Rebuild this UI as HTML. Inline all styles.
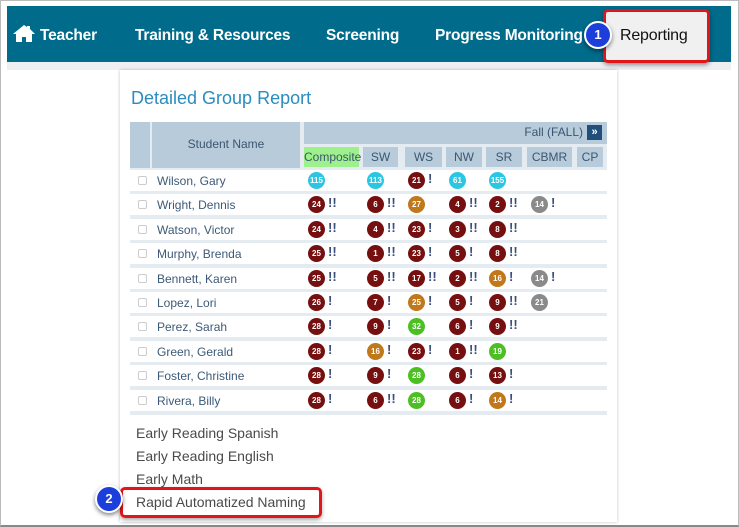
<!DOCTYPE html>
<html><head><meta charset="utf-8"><style>
*{margin:0;padding:0;box-sizing:border-box}
body{width:739px;height:527px;background:#fff;position:relative;overflow:hidden;font-family:"Liberation Sans",Arial,sans-serif}
.frame{position:absolute;left:0;top:0;width:739px;height:527px;border:1px solid #bbb;border-bottom:2px solid #888}
.nav{position:absolute;left:7px;top:6px;width:724px;height:56px;background:#006b8b}
.strip{position:absolute;left:7px;top:62px;width:724px;height:8px;background:#eeeff1}
.nt{position:absolute;top:27px;color:#fff;font-weight:bold;font-size:15.5px;letter-spacing:-0.2px}
.rep{position:absolute;left:603px;top:9px;width:107px;height:54px;background:#f0f0f0;border:3px solid #e0161b;border-radius:5px;box-shadow:0 2px 4px rgba(0,0,0,.4)}
.badge{position:absolute;width:28px;height:28px;border-radius:50%;background:#1c3fdc;border:2px solid #fff;box-shadow:0 2px 4px rgba(0,0,0,.5);color:#fff;font-size:13px;font-weight:bold;text-align:center;line-height:24px}
.panel{position:absolute;left:120px;top:70px;width:497px;height:452px;background:#fff;box-shadow:0 0 3px rgba(0,0,0,.25)}
.title{position:absolute;left:131px;top:88px;color:#2a8cc0;font-size:18px}
.tbl{position:absolute;left:130px;top:122px;width:477px;height:293px;background:#e4ebf1}
.hd{position:absolute;background:#b8cbdb;color:#3b5670;font-size:12px;text-align:center}
.row{position:absolute;left:0;width:477px;height:21px;background:#fff}
.cb{position:absolute;left:8px;top:6px;width:9px;height:9px;border:1px solid #ccc;border-radius:2px}
.nm{position:absolute;left:27px;top:4px;font-size:12px;color:#3c5a78}
.c{position:absolute;top:2px;width:17px;height:17px;border-radius:50%;color:#fff;font-size:8px;font-weight:bold;text-align:center;line-height:17px}
.r{background:#761010}.o{background:#c0781a}.b{background:#2cc6e2}.g{background:#4cc022}.y{background:#8a8a8a}
.x{position:absolute;top:1px;font-weight:bold;color:#3c4e7a;font-size:13px}
.lk{position:absolute;left:136px;font-size:14px;color:#4a4a4a}
.red2{position:absolute;left:120px;top:487px;width:202px;height:31px;border:3px solid #e0161b;border-radius:5px;box-shadow:0 2px 4px rgba(0,0,0,.35)}
</style></head><body>
<div class="frame"></div>
<div class="nav"></div>
<div class="strip"></div>
<svg style="position:absolute;left:12px;top:24px" width="24" height="18" viewBox="0 0 24 18"><path d="M12 1L1 10h3v8h6v-5h4v5h6v-8h3L18 5V2h-3v1z" fill="#fff"/></svg>
<div class="nt" style="left:40px">Teacher</div>
<div class="nt" style="left:135px">Training &amp; Resources</div>
<div class="nt" style="left:326px">Screening</div>
<div class="nt" style="left:435px">Progress Monitoring</div>
<div class="rep"></div>
<div class="nt" style="left:620px;color:#111;font-weight:normal;font-size:16px">Reporting</div>
<div class="badge" style="left:584px;top:21px">1</div>

<div class="panel"></div>
<div class="title">Detailed Group Report</div>
<div class="tbl">
<div class="hd" style="left:0;top:0;width:20px;height:46px"></div>
<div class="hd" style="left:22px;top:0;width:148px;height:46px;line-height:44px">Student Name</div>
<div class="hd" style="left:174px;top:0;width:303px;height:22px;text-align:right;padding-right:24px;line-height:20px">Fall (FALL)</div>
<div style="position:absolute;left:457px;top:3px;width:15px;height:15px;background:#1f4f7a;color:#fff;font-size:11px;font-weight:bold;text-align:center;line-height:14px">»</div>
<div class="hd" style="left:174px;top:25px;width:55px;height:20px;line-height:20px;background:#9ef08c">Composite</div>
<div class="hd" style="left:233px;top:25px;width:35px;height:20px;line-height:20px">SW</div>
<div class="hd" style="left:275px;top:25px;width:37px;height:20px;line-height:20px">WS</div>
<div class="hd" style="left:316px;top:25px;width:36px;height:20px;line-height:20px">NW</div>
<div class="hd" style="left:356px;top:25px;width:36px;height:20px;line-height:20px">SR</div>
<div class="hd" style="left:397px;top:25px;width:45px;height:20px;line-height:20px">CBMR</div>
<div class="hd" style="left:447px;top:25px;width:26px;height:20px;line-height:20px">CP</div>

<div class="row" style="top:48px"><div class="cb"></div><div class="nm">Wilson, Gary</div>
<div class="c b" style="left:178px">115</div><div class="c b" style="left:237px">113</div><div class="c r" style="left:278px">21</div><span class="x" style="left:298px">!</span><div class="c b" style="left:319px">61</div><div class="c b" style="left:359px">155</div></div>

<div class="row" style="top:72px"><div class="cb"></div><div class="nm">Wright, Dennis</div>
<div class="c r" style="left:178px">24</div><span class="x" style="left:198px">!!</span><div class="c r" style="left:237px">6</div><span class="x" style="left:257px">!!</span><div class="c o" style="left:278px">27</div><div class="c r" style="left:319px">4</div><span class="x" style="left:339px">!!</span><div class="c r" style="left:359px">2</div><span class="x" style="left:379px">!!</span><div class="c y" style="left:401px">14</div><span class="x" style="left:421px">!</span></div>

<div class="row" style="top:97px"><div class="cb"></div><div class="nm">Watson, Victor</div>
<div class="c r" style="left:178px">24</div><span class="x" style="left:198px">!!</span><div class="c r" style="left:237px">4</div><span class="x" style="left:257px">!!</span><div class="c r" style="left:278px">23</div><span class="x" style="left:298px">!</span><div class="c r" style="left:319px">3</div><span class="x" style="left:339px">!!</span><div class="c r" style="left:359px">8</div><span class="x" style="left:379px">!!</span></div>

<div class="row" style="top:121px"><div class="cb"></div><div class="nm">Murphy, Brenda</div>
<div class="c r" style="left:178px">25</div><span class="x" style="left:198px">!!</span><div class="c r" style="left:237px">1</div><span class="x" style="left:257px">!!</span><div class="c r" style="left:278px">23</div><span class="x" style="left:298px">!</span><div class="c r" style="left:319px">5</div><span class="x" style="left:339px">!</span><div class="c r" style="left:359px">8</div><span class="x" style="left:379px">!!</span></div>

<div class="row" style="top:146px"><div class="cb"></div><div class="nm">Bennett, Karen</div>
<div class="c r" style="left:178px">25</div><span class="x" style="left:198px">!!</span><div class="c r" style="left:237px">5</div><span class="x" style="left:257px">!!</span><div class="c r" style="left:278px">17</div><span class="x" style="left:298px">!!</span><div class="c r" style="left:319px">2</div><span class="x" style="left:339px">!!</span><div class="c o" style="left:359px">16</div><span class="x" style="left:379px">!</span><div class="c y" style="left:401px">14</div><span class="x" style="left:421px">!</span></div>

<div class="row" style="top:170px"><div class="cb"></div><div class="nm">Lopez, Lori</div>
<div class="c r" style="left:178px">26</div><span class="x" style="left:198px">!</span><div class="c r" style="left:237px">7</div><span class="x" style="left:257px">!</span><div class="c o" style="left:278px">25</div><span class="x" style="left:298px">!</span><div class="c r" style="left:319px">5</div><span class="x" style="left:339px">!</span><div class="c r" style="left:359px">9</div><span class="x" style="left:379px">!!</span><div class="c y" style="left:401px">21</div></div>

<div class="row" style="top:194px"><div class="cb"></div><div class="nm">Perez, Sarah</div>
<div class="c r" style="left:178px">28</div><span class="x" style="left:198px">!</span><div class="c r" style="left:237px">9</div><span class="x" style="left:257px">!</span><div class="c g" style="left:278px">32</div><div class="c r" style="left:319px">6</div><span class="x" style="left:339px">!</span><div class="c r" style="left:359px">9</div><span class="x" style="left:379px">!!</span></div>

<div class="row" style="top:219px"><div class="cb"></div><div class="nm">Green, Gerald</div>
<div class="c r" style="left:178px">28</div><span class="x" style="left:198px">!</span><div class="c o" style="left:237px">16</div><span class="x" style="left:257px">!</span><div class="c r" style="left:278px">23</div><span class="x" style="left:298px">!</span><div class="c r" style="left:319px">1</div><span class="x" style="left:339px">!!</span><div class="c g" style="left:359px">19</div></div>

<div class="row" style="top:243px"><div class="cb"></div><div class="nm">Foster, Christine</div>
<div class="c r" style="left:178px">28</div><span class="x" style="left:198px">!</span><div class="c r" style="left:237px">9</div><span class="x" style="left:257px">!</span><div class="c g" style="left:278px">28</div><div class="c r" style="left:319px">6</div><span class="x" style="left:339px">!</span><div class="c r" style="left:359px">13</div><span class="x" style="left:379px">!</span></div>

<div class="row" style="top:268px"><div class="cb"></div><div class="nm">Rivera, Billy</div>
<div class="c r" style="left:178px">28</div><span class="x" style="left:198px">!</span><div class="c r" style="left:237px">6</div><span class="x" style="left:257px">!!</span><div class="c g" style="left:278px">28</div><div class="c r" style="left:319px">6</div><span class="x" style="left:339px">!</span><div class="c o" style="left:359px">14</div><span class="x" style="left:379px">!</span></div>
</div>

<div class="lk" style="top:425px">Early Reading Spanish</div>
<div class="lk" style="top:448px">Early Reading English</div>
<div class="lk" style="top:471px">Early Math</div>
<div class="red2"></div>
<div class="lk" style="top:494px">Rapid Automatized Naming</div>
<div class="badge" style="left:95px;top:485px">2</div>
</body></html>
